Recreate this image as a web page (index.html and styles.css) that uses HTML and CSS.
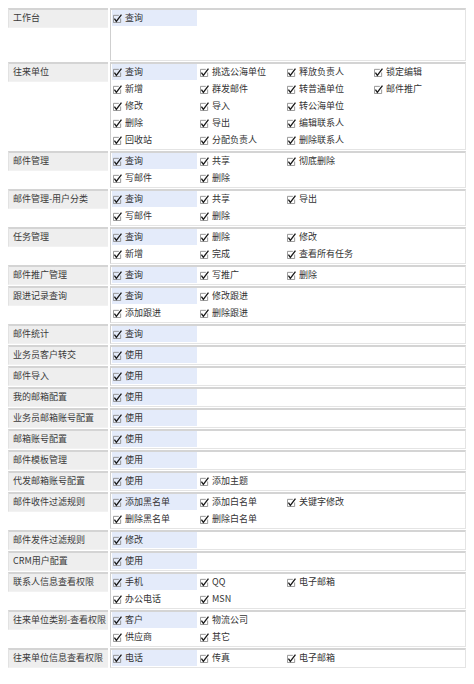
FILE: index.html
```html
<!DOCTYPE html>
<html lang="zh-CN">
<head>
<meta charset="utf-8">
<title>权限设置</title>
<link rel="stylesheet" href="styles.css">
</head>
<body>
<svg class="defs" width="0" height="0" aria-hidden="true">
  <symbol id="ck" viewBox="0 0 10 10">
    <path d="M0.5 1.5H6.5M0.5 1.5V9.5H8.5V5" fill="none" stroke="#8c8c8c" stroke-width="1"/>
    <path d="M1.6 5.2L3.7 8.1L9.4 0.6" fill="none" stroke="#1a1a1a" stroke-width="1.5"/>
  </symbol>
</svg>
<div class="perm">

  <div class="block">
    <div class="label">工作台</div>
    <div class="cell tall">
      <div class="grid">
        <span class="it first"><svg class="ck"><use href="#ck"/></svg>查询</span>
      </div>
    </div>
  </div>

  <div class="block">
    <div class="label">往来单位</div>
    <div class="cell">
      <div class="grid">
        <span class="it first"><svg class="ck"><use href="#ck"/></svg>查询</span>
        <span class="it"><svg class="ck"><use href="#ck"/></svg>挑选公海单位</span>
        <span class="it"><svg class="ck"><use href="#ck"/></svg>释放负责人</span>
        <span class="it"><svg class="ck"><use href="#ck"/></svg>锁定编辑</span>
        <span class="it"><svg class="ck"><use href="#ck"/></svg>新增</span>
        <span class="it"><svg class="ck"><use href="#ck"/></svg>群发邮件</span>
        <span class="it"><svg class="ck"><use href="#ck"/></svg>转普通单位</span>
        <span class="it"><svg class="ck"><use href="#ck"/></svg>邮件推广</span>
        <span class="it"><svg class="ck"><use href="#ck"/></svg>修改</span>
        <span class="it"><svg class="ck"><use href="#ck"/></svg>导入</span>
        <span class="it"><svg class="ck"><use href="#ck"/></svg>转公海单位</span>
        <span class="it empty"></span>
        <span class="it"><svg class="ck"><use href="#ck"/></svg>删除</span>
        <span class="it"><svg class="ck"><use href="#ck"/></svg>导出</span>
        <span class="it"><svg class="ck"><use href="#ck"/></svg>编辑联系人</span>
        <span class="it empty"></span>
        <span class="it"><svg class="ck"><use href="#ck"/></svg>回收站</span>
        <span class="it"><svg class="ck"><use href="#ck"/></svg>分配负责人</span>
        <span class="it"><svg class="ck"><use href="#ck"/></svg>删除联系人</span>
      </div>
    </div>
  </div>

  <div class="block">
    <div class="label">邮件管理</div>
    <div class="cell">
      <div class="grid">
        <span class="it first"><svg class="ck"><use href="#ck"/></svg>查询</span>
        <span class="it"><svg class="ck"><use href="#ck"/></svg>共享</span>
        <span class="it"><svg class="ck"><use href="#ck"/></svg>彻底删除</span>
        <span class="it empty"></span>
        <span class="it"><svg class="ck"><use href="#ck"/></svg>写邮件</span>
        <span class="it"><svg class="ck"><use href="#ck"/></svg>删除</span>
      </div>
    </div>
  </div>

  <div class="block">
    <div class="label">邮件管理-用户分类</div>
    <div class="cell">
      <div class="grid">
        <span class="it first"><svg class="ck"><use href="#ck"/></svg>查询</span>
        <span class="it"><svg class="ck"><use href="#ck"/></svg>共享</span>
        <span class="it"><svg class="ck"><use href="#ck"/></svg>导出</span>
        <span class="it empty"></span>
        <span class="it"><svg class="ck"><use href="#ck"/></svg>写邮件</span>
        <span class="it"><svg class="ck"><use href="#ck"/></svg>删除</span>
      </div>
    </div>
  </div>

  <div class="block">
    <div class="label">任务管理</div>
    <div class="cell">
      <div class="grid">
        <span class="it first"><svg class="ck"><use href="#ck"/></svg>查询</span>
        <span class="it"><svg class="ck"><use href="#ck"/></svg>删除</span>
        <span class="it"><svg class="ck"><use href="#ck"/></svg>修改</span>
        <span class="it empty"></span>
        <span class="it"><svg class="ck"><use href="#ck"/></svg>新增</span>
        <span class="it"><svg class="ck"><use href="#ck"/></svg>完成</span>
        <span class="it"><svg class="ck"><use href="#ck"/></svg>查看所有任务</span>
      </div>
    </div>
  </div>

  <div class="block">
    <div class="label">邮件推广管理</div>
    <div class="cell">
      <div class="grid">
        <span class="it first"><svg class="ck"><use href="#ck"/></svg>查询</span>
        <span class="it"><svg class="ck"><use href="#ck"/></svg>写推广</span>
        <span class="it"><svg class="ck"><use href="#ck"/></svg>删除</span>
      </div>
    </div>
  </div>

  <div class="block">
    <div class="label">跟进记录查询</div>
    <div class="cell">
      <div class="grid">
        <span class="it first"><svg class="ck"><use href="#ck"/></svg>查询</span>
        <span class="it"><svg class="ck"><use href="#ck"/></svg>修改跟进</span>
        <span class="it empty"></span>
        <span class="it empty"></span>
        <span class="it"><svg class="ck"><use href="#ck"/></svg>添加跟进</span>
        <span class="it"><svg class="ck"><use href="#ck"/></svg>删除跟进</span>
      </div>
    </div>
  </div>

  <div class="block">
    <div class="label">邮件统计</div>
    <div class="cell"><div class="grid"><span class="it first"><svg class="ck"><use href="#ck"/></svg>查询</span></div></div>
  </div>

  <div class="block">
    <div class="label">业务员客户转交</div>
    <div class="cell"><div class="grid"><span class="it first"><svg class="ck"><use href="#ck"/></svg>使用</span></div></div>
  </div>

  <div class="block">
    <div class="label">邮件导入</div>
    <div class="cell"><div class="grid"><span class="it first"><svg class="ck"><use href="#ck"/></svg>使用</span></div></div>
  </div>

  <div class="block">
    <div class="label">我的邮箱配置</div>
    <div class="cell"><div class="grid"><span class="it first"><svg class="ck"><use href="#ck"/></svg>使用</span></div></div>
  </div>

  <div class="block">
    <div class="label">业务员邮箱账号配置</div>
    <div class="cell"><div class="grid"><span class="it first"><svg class="ck"><use href="#ck"/></svg>使用</span></div></div>
  </div>

  <div class="block">
    <div class="label">邮箱账号配置</div>
    <div class="cell"><div class="grid"><span class="it first"><svg class="ck"><use href="#ck"/></svg>使用</span></div></div>
  </div>

  <div class="block">
    <div class="label">邮件模板管理</div>
    <div class="cell"><div class="grid"><span class="it first"><svg class="ck"><use href="#ck"/></svg>使用</span></div></div>
  </div>

  <div class="block">
    <div class="label">代发邮箱账号配置</div>
    <div class="cell">
      <div class="grid">
        <span class="it first"><svg class="ck"><use href="#ck"/></svg>使用</span>
        <span class="it"><svg class="ck"><use href="#ck"/></svg>添加主题</span>
      </div>
    </div>
  </div>

  <div class="block">
    <div class="label">邮件收件过滤规则</div>
    <div class="cell">
      <div class="grid">
        <span class="it first"><svg class="ck"><use href="#ck"/></svg>添加黑名单</span>
        <span class="it"><svg class="ck"><use href="#ck"/></svg>添加白名单</span>
        <span class="it"><svg class="ck"><use href="#ck"/></svg>关键字修改</span>
        <span class="it empty"></span>
        <span class="it"><svg class="ck"><use href="#ck"/></svg>删除黑名单</span>
        <span class="it"><svg class="ck"><use href="#ck"/></svg>删除白名单</span>
      </div>
    </div>
  </div>

  <div class="block">
    <div class="label">邮件发件过滤规则</div>
    <div class="cell"><div class="grid"><span class="it first"><svg class="ck"><use href="#ck"/></svg>修改</span></div></div>
  </div>

  <div class="block">
    <div class="label">CRM用户配置</div>
    <div class="cell"><div class="grid"><span class="it first"><svg class="ck"><use href="#ck"/></svg>使用</span></div></div>
  </div>

  <div class="block">
    <div class="label">联系人信息查看权限</div>
    <div class="cell">
      <div class="grid">
        <span class="it first"><svg class="ck"><use href="#ck"/></svg>手机</span>
        <span class="it"><svg class="ck"><use href="#ck"/></svg>QQ</span>
        <span class="it"><svg class="ck"><use href="#ck"/></svg>电子邮箱</span>
        <span class="it empty"></span>
        <span class="it"><svg class="ck"><use href="#ck"/></svg>办公电话</span>
        <span class="it"><svg class="ck"><use href="#ck"/></svg>MSN</span>
      </div>
    </div>
  </div>

  <div class="block">
    <div class="label">往来单位类别-查看权限</div>
    <div class="cell">
      <div class="grid">
        <span class="it first"><svg class="ck"><use href="#ck"/></svg>客户</span>
        <span class="it"><svg class="ck"><use href="#ck"/></svg>物流公司</span>
        <span class="it empty"></span>
        <span class="it empty"></span>
        <span class="it"><svg class="ck"><use href="#ck"/></svg>供应商</span>
        <span class="it"><svg class="ck"><use href="#ck"/></svg>其它</span>
      </div>
    </div>
  </div>

  <div class="block">
    <div class="label">往来单位信息查看权限</div>
    <div class="cell">
      <div class="grid">
        <span class="it first"><svg class="ck"><use href="#ck"/></svg>电话</span>
        <span class="it"><svg class="ck"><use href="#ck"/></svg>传真</span>
        <span class="it"><svg class="ck"><use href="#ck"/></svg>电子邮箱</span>
      </div>
    </div>
  </div>

</div>
</body>
</html>
```
FILE: styles.css
```css
html, body {
  background: #ffffff;
}
body {
  margin: 8px;
  font-family: "Noto Sans CJK SC", "Noto Sans", sans-serif;
  font-size: 9px;
  color: #333333;
}
.defs {
  position: absolute;
  width: 0;
  height: 0;
  overflow: hidden;
}
.perm {
  display: flex;
  flex-direction: column;
  gap: 1px;
  width: 458px;
}
.block {
  display: flex;
  gap: 2px;
  align-items: flex-start;
}
.label {
  box-sizing: border-box;
  width: 100px;
  height: 20px;
  flex: none;
  background: #eeeeee;
  border-top: 2px solid #d4d4d4;
  border-left: 1px solid #e2e2e2;
  border-bottom: 1px solid #f2f2f2;
  padding: 0 0 0 4px;
  line-height: 15px;
  color: #3a3a3a;
  white-space: nowrap;
}
.cell {
  flex: 1;
  box-sizing: border-box;
  background: #ffffff;
  border-top: 2px solid #d4d4d4;
  border-left: 1px solid #cfcfcf;
  border-right: 1px solid #e4e4e4;
  border-bottom: 1px solid #e4e4e4;
  padding: 0 0 1px 1px;
}
.cell.tall {
  height: 53px;
}
.grid {
  display: grid;
  grid-template-columns: repeat(4, 85px);
  grid-auto-rows: 16px;
  column-gap: 2px;
  row-gap: 1px;
}
.it {
  display: flex;
  align-items: center;
  gap: 3px;
  padding-left: 1px;
  height: 16px;
  line-height: 16px;
  white-space: nowrap;
  color: #333333;
}
.it.first {
  background: #e4ebfa;
}
.ck {
  width: 9px;
  height: 9px;
  flex: none;
}
```
